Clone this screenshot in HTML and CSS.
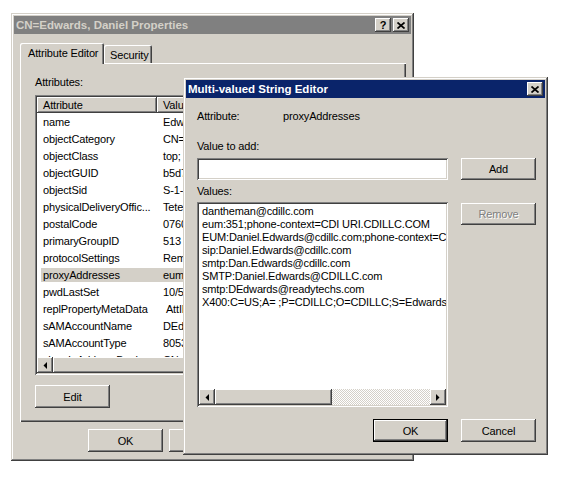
FILE: index.html
```html
<!DOCTYPE html>
<html lang="en">
<head>
    <meta charset="UTF-8">
    <title>CN=Edwards, Daniel Properties</title>
    <link rel="stylesheet" href="styles.css">
</head>
<body>
<div class="desktop">

    <!-- back window: properties sheet -->
    <div class="window props">
        <div class="titlebar inactive">
            <span class="caption">CN=Edwards, Daniel Properties</span>
            <span class="capbtn raised help">?</span>
            <span class="capbtn raised"><svg width="8" height="7" viewBox="0 0 8 7"><path d="M0.5 0.5L7.5 6.5M7.5 0.5L0.5 6.5" stroke="#000" stroke-width="1.7"/></svg></span>
        </div>
        <div class="props-body">
            <div class="tabs">
                <div class="tab selected">Attribute Editor</div>
                <div class="tab second">Security</div>
            </div>
            <div class="panel">
                <div class="label">Attributes:</div>
                <div class="listbox sunken">
                    <div class="lv-header">
                        <div class="hcell raised col1">Attribute</div>
                        <div class="hcell raised col2">Value</div>
                    </div>
                    <div class="lv-rows">
                        <div class="row"><div class="cells"><span class="c1">name</span><span class="c2">Edwards, Daniel</span></div></div>
                        <div class="row"><div class="cells"><span class="c1">objectCategory</span><span class="c2">CN=Person,CN=Schema</span></div></div>
                        <div class="row"><div class="cells"><span class="c1">objectClass</span><span class="c2">top; person</span></div></div>
                        <div class="row"><div class="cells"><span class="c1">objectGUID</span><span class="c2">b5d7f1a2-0c3e</span></div></div>
                        <div class="row"><div class="cells"><span class="c1">objectSid</span><span class="c2">S-1-5-21-1844</span></div></div>
                        <div class="row"><div class="cells"><span class="c1">physicalDeliveryOffic...</span><span class="c2">Teterboro</span></div></div>
                        <div class="row"><div class="cells"><span class="c1">postalCode</span><span class="c2">07608</span></div></div>
                        <div class="row"><div class="cells"><span class="c1">primaryGroupID</span><span class="c2">513 = ( GROUP_RID_USERS )</span></div></div>
                        <div class="row"><div class="cells"><span class="c1">protocolSettings</span><span class="c2">RemoteDesktop</span></div></div>
                        <div class="row sel"><div class="cells"><span class="c1">proxyAddresses</span><span class="c2">eum:351;phone-context</span></div></div>
                        <div class="row"><div class="cells"><span class="c1">pwdLastSet</span><span class="c2">10/5/2009</span></div></div>
                        <div class="row"><div class="cells"><span class="c1">replPropertyMetaData</span><span class="c2">&nbsp;AttID</span></div></div>
                        <div class="row"><div class="cells"><span class="c1">sAMAccountName</span><span class="c2">DEdwards</span></div></div>
                        <div class="row"><div class="cells"><span class="c1">sAMAccountType</span><span class="c2">805306368</span></div></div>
                        <div class="row"><div class="cells"><span class="c1">showInAddressBook</span><span class="c2">CN=Default</span></div></div>
                    </div>
                    <div class="hscroll">
                        <div class="sbtn raised"><svg width="4" height="7" viewBox="0 0 4 7"><path d="M4 0V7L0.5 3.5Z"/></svg></div>
                        <div class="thumb raised wide"></div>
                        <div class="track"></div>
                    </div>
                </div>
                <button class="btn raised edit">Edit</button>
            </div>
            <div class="footer">
                <button class="btn raised">OK</button>
                <button class="btn raised">Cancel</button>
                <button class="btn raised">Apply</button>
                <button class="btn raised">Help</button>
            </div>
        </div>
    </div>

    <!-- front window: multi-valued string editor -->
    <div class="window editor">
        <div class="titlebar active">
            <span class="caption">Multi-valued String Editor</span>
            <span class="capbtn raised"><svg width="8" height="7" viewBox="0 0 8 7"><path d="M0.5 0.5L7.5 6.5M7.5 0.5L0.5 6.5" stroke="#000" stroke-width="1.7"/></svg></span>
        </div>
        <div class="editor-body">
            <div class="attr-row"><span class="attr-label">Attribute:</span><span>proxyAddresses</span></div>
            <div class="label add-label">Value to add:</div>
            <div class="input sunken"></div>
            <button class="btn raised add">Add</button>
            <div class="label values-label">Values:</div>
            <div class="values sunken">
                <div class="values-list">
                    <div>dantheman@cdillc.com</div>
                    <div>eum:351;phone-context=CDI URI.CDILLC.COM</div>
                    <div>EUM:Daniel.Edwards@cdillc.com;phone-context=CDI URI.CDILLC.COM</div>
                    <div>sip:Daniel.Edwards@cdillc.com</div>
                    <div>smtp:Dan.Edwards@cdillc.com</div>
                    <div>SMTP:Daniel.Edwards@CDILLC.com</div>
                    <div>smtp:DEdwards@readytechs.com</div>
                    <div>X400:C=US;A= ;P=CDILLC;O=CDILLC;S=Edwards;G=Daniel;</div>
                </div>
                <div class="hscroll">
                    <div class="sbtn raised"><svg width="4" height="7" viewBox="0 0 4 7"><path d="M4 0V7L0.5 3.5Z"/></svg></div>
                    <div class="thumb raised"></div>
                    <div class="track"></div>
                    <div class="sbtn raised"><svg width="4" height="7" viewBox="0 0 4 7"><path d="M0 0V7L3.5 3.5Z"/></svg></div>
                </div>
            </div>
            <button class="btn raised remove" disabled>Remove</button>
            <button class="btn raised ok default">OK</button>
            <button class="btn raised cancel">Cancel</button>
        </div>
    </div>

</div>
</body>
</html>
```

FILE: styles.css
```css
* { box-sizing: border-box; }
body { margin: 0; background: #fff; font-family: "Liberation Sans", Arial, sans-serif; font-size: 11px; letter-spacing: -0.15px; color: #000; }
.desktop { position: relative; width: 565px; height: 477px; overflow: hidden; }

/* 3d bevels */
.raised { background: #d4d0c8; box-shadow: inset -1px -1px #404040, inset 1px 1px #fff, inset -2px -2px #808080, inset 2px 2px #d4d0c8; }
.sunken { background: #fff; box-shadow: inset 1px 1px #808080, inset -1px -1px #fff, inset 2px 2px #404040, inset -2px -2px #d4d0c8; }

/* windows */
.window { position: absolute; background: #d4d0c8; padding: 3px; box-shadow: inset -1px -1px #404040, inset 1px 1px #d4d0c8, inset -2px -2px #808080, inset 2px 2px #fff; }
.props { left: 11px; top: 13px; width: 403px; height: 448px; }
.editor { left: 183px; top: 77px; width: 365px; height: 378px; }

.titlebar { height: 18px; display: flex; align-items: center; padding: 0 2px; font-weight: bold; font-size: 11.5px; letter-spacing: 0; }
.titlebar.inactive { background: #808080; color: #d4d0c8; }
.titlebar.active { background: #0a246a; color: #fff; }
.caption { flex: 1; white-space: nowrap; }
.capbtn { width: 16px; height: 14px; display: flex; align-items: center; justify-content: center; color: #000; font-size: 11px; }
.capbtn + .capbtn { margin-left: 2px; }
.capbtn.help { padding-bottom: 1px; }

.label { height: 13px; line-height: 13px; white-space: nowrap; }

/* buttons */
.btn { font: inherit; letter-spacing: inherit; color: #000; border: none; padding: 0; width: 75px; height: 23px; }
.btn.default { box-shadow: inset 0 0 0 1px #000, inset -2px -2px #404040, inset 2px 2px #fff, inset -3px -3px #808080; }
.btn:disabled { color: #808080; text-shadow: 1px 1px #fff; }

/* properties sheet */
.props-body { padding: 9px 5px 0 6px; }
.tabs { display: flex; align-items: flex-end; height: 20px; }
.tab { height: 18px; display: flex; align-items: center; padding-left: 6px; background: #d4d0c8; box-shadow: inset 1px 1px #fff, inset -1px 0 #404040, inset -2px 0 #808080; border-radius: 2px 2px 0 0; }
.tab.selected { width: 84px; height: 21px; margin-bottom: -1px; padding-left: 8px; padding-bottom: 1px; position: relative; z-index: 1; }
.tab.second { width: 48px; padding-top: 2px; }
.panel { height: 359px; padding: 13px 15px 0; box-shadow: inset 1px 1px #fff, inset -1px -1px #404040, inset -2px -2px #808080; }
.listbox { margin-top: 6px; height: 280px; padding: 2px; display: flex; flex-direction: column; overflow: hidden; }
.lv-header { display: flex; height: 16px; flex: none; }
.hcell { height: 16px; line-height: 16px; padding-left: 6px; white-space: nowrap; }
.hcell.col1 { width: 120px; }
.hcell.col2 { flex: 1; }
.lv-rows { flex: none; height: 244px; overflow: hidden; white-space: nowrap; }
.row { height: 17px; padding: 2px 0 1px 4px; }
.cells { height: 14px; display: flex; align-items: center; }
.row.sel .cells { background: #d4d0c8; }
.c1 { width: 116px; padding-left: 2px; flex: none; overflow: hidden; }
.c2 { padding-left: 6px; width: 28px; overflow: hidden; flex: none; }
.edit { margin-top: 10px; display: block; }
.footer { display: flex; justify-content: flex-end; gap: 6px; margin-top: 7px; }

/* scrollbars */
.hscroll { display: flex; height: 16px; flex: none; }
.sbtn { width: 16px; height: 16px; display: flex; align-items: center; justify-content: center; flex: none; }
.thumb { width: 117px; height: 16px; flex: none; }
.thumb.wide { width: 230px; }
.track { flex: 1; background: repeating-conic-gradient(#d4d0c8 0 25%, #fff 0 50%) 0 0 / 2px 2px; }

/* string editor */
.editor-body { padding: 12px 9px 0 11px; display: grid; grid-template-columns: 251px 75px; column-gap: 13px; }
.attr-row { grid-column: span 2; display: flex; height: 13px; line-height: 13px; }
.attr-label { width: 86px; }
.add-label { grid-column: span 2; margin-top: 17px; }
.input { margin-top: 5px; height: 22px; }
.add { margin-top: 5px; height: 22px; }
.values-label { grid-column: span 2; margin-top: 5px; }
.values { margin-top: 4px; height: 205px; padding: 2px; display: flex; flex-direction: column; }
.values-list { flex: 1; padding: 1px 0 0 3px; overflow: hidden; white-space: nowrap; line-height: 13px; }
.remove { margin-top: 5px; height: 22px; align-self: start; }
.ok { margin-top: 12px; justify-self: end; }
.cancel { margin-top: 12px; }
```
